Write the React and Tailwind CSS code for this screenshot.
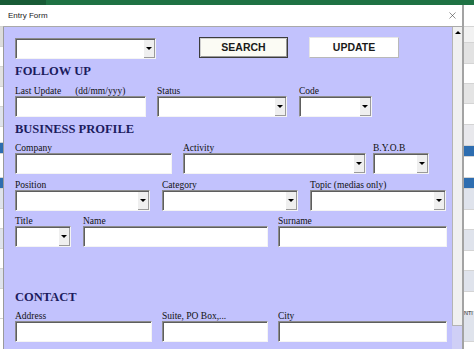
import { X } from 'lucide-react'

const serif = "font-['Liberation_Serif','Times_New_Roman',serif]"
const sans = "font-['Liberation_Sans',Arial,sans-serif]"

const rows = [
  {
    mt: 'mt-[7px]',
    fields: [
      { label: 'Last Update', extra: '(dd/mm/yyy)', w: 'w-[131px]' },
      { label: 'Status', w: 'w-[130px] ml-[11px]', combo: true },
      { label: 'Code', w: 'w-[73px] ml-[12px]', combo: true },
    ],
  },
  {
    heading: 'BUSINESS PROFILE',
    headingMt: 'mt-[4px]',
    mt: 'mt-[6px]',
    fields: [
      { label: 'Company', w: 'w-[157px]' },
      { label: 'Activity', w: 'w-[183px] ml-[11px]', combo: true },
      { label: 'B.Y.O.B', w: 'w-[56px] ml-[7px]', combo: true },
    ],
  },
  {
    mt: 'mt-[4px]',
    fields: [
      { label: 'Position', w: 'w-[135px]', combo: true },
      { label: 'Category', w: 'w-[136px] ml-[12px]', combo: true },
      { label: 'Topic (medias only)', w: 'w-[136px] ml-[12px]', combo: true },
    ],
  },
  {
    mt: 'mt-[3px]',
    fields: [
      { label: 'Title', w: 'w-[56px]', combo: true },
      { label: 'Name', w: 'w-[185px] ml-[12px]' },
      { label: 'Surname', w: 'w-[169px] ml-[10px]' },
    ],
  },
  {
    heading: 'CONTACT',
    headingMt: 'mt-[42px]',
    mt: 'mt-[6px]',
    fields: [
      { label: 'Address', w: 'w-[137px]' },
      { label: 'Suite, PO Box,...', w: 'w-[106px] ml-[10px]' },
      { label: 'City', w: 'w-[169px] ml-[10px]' },
    ],
  },
]

function Arrow() {
  return <div className="h-0 w-0 border-x-[3px] border-t-[3px] border-x-transparent border-t-black" />
}

function Box({ combo, className = '' }) {
  return (
    <div
      className={`flex h-[21px] justify-end border border-t-[#8c8c8c] border-l-[#8c8c8c] border-r-[#f4f4f4] border-b-[#f4f4f4] bg-white shadow-[inset_1px_1px_0_#5e5e5e] ${className}`}
    >
      {combo && (
        <div className="mt-[1px] flex w-[11px] items-center justify-center border-r border-b border-r-[#9a9a9a] border-b-[#9a9a9a] bg-[#efefef]">
          <Arrow />
        </div>
      )}
    </div>
  )
}

function Field({ label, extra, w, combo }) {
  return (
    <div className={`flex shrink-0 flex-col ${w}`}>
      <div className={`h-[11px] whitespace-nowrap text-[9.5px] leading-[14px] text-[#111] ${serif}`}>
        {label}
        {extra && <span className="ml-[14px]">{extra}</span>}
      </div>
      <Box combo={combo} className="mt-[1px]" />
    </div>
  )
}

function Heading({ children, className }) {
  return (
    <div className={`h-[14px] text-[12.5px] font-bold leading-[16px] text-[#1c1c5e] ${serif} ${className}`}>
      {children}
    </div>
  )
}

function Button({ children, pressed, className }) {
  return (
    <div
      className={`flex h-[21px] items-center justify-center text-[10.5px] font-bold text-[#1a1a1a] ${sans} ${
        pressed
          ? 'border border-[#3c3c3c] bg-[#fbfbf4] shadow-[inset_1px_1px_0_#cfcfcf,inset_-1px_-1px_0_#9a9a9a]'
          : 'border border-[#e6e6e6] border-r-[#b9b9b9] border-b-[#b9b9b9] bg-white'
      } ${className}`}
    >
      {children}
    </div>
  )
}

function SheetStrip({ bands, className }) {
  return (
    <div className={`flex flex-col ${className}`}>
      {bands.map((b, i) => (
        <div key={i} className={`shrink-0 border-b border-[#d4d4d4] ${b}`} />
      ))}
    </div>
  )
}

const rightBands = [
  'h-[22px] bg-white',
  'h-[16px] bg-[#f2f2f2]',
  'h-[21px] bg-[#e2e2e2]',
  'h-[20px] bg-white',
  'h-[20px] bg-[#e4e4e4]',
  'h-[21px] bg-white',
  'h-[21px] bg-[#e8e8ec]',
  'h-[11px] bg-[#2d6db0]',
  'h-[21px] bg-white',
  'h-[11px] bg-[#2d6db0]',
  'h-[21px] bg-[#dfe3ec]',
  'h-[20px] bg-white',
  'h-[21px] bg-[#dfe3ec]',
  'h-[20px] bg-white',
  'h-[21px] bg-[#dfe3ec]',
  'h-[20px] bg-white',
  'h-[30px] bg-[#dfe3ec]',
]

const leftBands = [
  'h-[22px] bg-white',
  'h-[20px] bg-[#dcdcdc]',
  'h-[20px] bg-white',
  'h-[20px] bg-[#e2e2e2]',
  'h-[20px] bg-white',
  'h-[20px] bg-[#dfe3ec]',
  'h-[16px] bg-white',
  'h-[11px] bg-[#2d6db0]',
  'h-[24px] bg-white',
  'h-[11px] bg-[#2d6db0]',
  'h-[20px] bg-[#dfe3ec]',
  'h-[20px] bg-white',
  'h-[20px] bg-[#dfe3ec]',
  'h-[20px] bg-white',
  'h-[20px] bg-[#dfe3ec]',
  'h-[30px] bg-white',
]

export default function App() {
  return (
    <div className="flex h-[349px] w-[474px] flex-col overflow-hidden bg-white">
      <div className="flex h-[5px] shrink-0 bg-[#1f7244]">
        <div className="w-[46px] bg-[#185b36]" />
      </div>
      <div className="flex min-h-0 flex-1">
        <SheetStrip bands={leftBands} className="w-[3px] shrink-0" />

        <div className="flex w-[461px] shrink-0 flex-col border-r-2 border-[#a3a3a3] bg-white">
          <div className="flex h-[22px] shrink-0 items-center justify-between border-b border-[#a9a9a9] pl-[5px] pr-[4px]">
            <span className={`text-[8px] text-[#222] ${sans}`}>Entry Form</span>
            <X size={11} strokeWidth={1.2} className="text-[#333]" />
          </div>

          <div className="flex min-h-0 flex-1">
            <div className="flex-1 border-l border-[#9a9a9a] bg-[#c2c2fd] pl-[11px] pt-[10px]">
              <div className="flex h-[22px] items-start">
                <Box combo className="mt-[1px] w-[141px]" />
                <Button pressed className="ml-[43px] w-[89px]">SEARCH</Button>
                <Button className="ml-[21px] w-[90px]">UPDATE</Button>
              </div>

              <Heading className="mt-[4px]">FOLLOW UP</Heading>

              {rows.map((row, i) => (
                <div key={i}>
                  {row.heading && <Heading className={row.headingMt}>{row.heading}</Heading>}
                  <div className={`flex ${row.mt}`}>
                    {row.fields.map((f) => (
                      <Field key={f.label} {...f} />
                    ))}
                  </div>
                </div>
              ))}
            </div>

            <div className="flex w-[10px] shrink-0 flex-col">
              <div className="flex h-[299px] flex-col items-center border-b border-l border-[#b4b4b4] bg-[#f0f0f0] pt-[4px]">
                <div className="h-0 w-0 border-x-[3px] border-b-[3px] border-x-transparent border-b-black" />
              </div>
              <div className="flex-1 bg-[#cfcff6]" />
            </div>
          </div>
        </div>

        <div className="relative flex-1 overflow-hidden">
          <SheetStrip bands={rightBands} className="w-full" />
          <span className={`absolute left-0 top-[305px] text-[5.5px] leading-[7px] text-[#333] ${sans}`}>NTI</span>
        </div>
      </div>
    </div>
  )
}
